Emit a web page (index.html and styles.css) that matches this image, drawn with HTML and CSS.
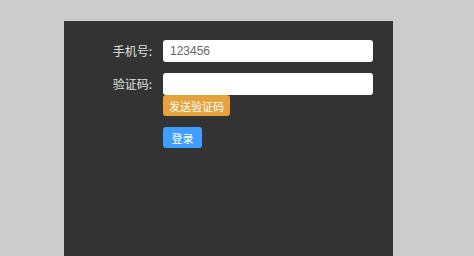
FILE: index.html
```html
<!DOCTYPE html>
<html lang="zh">
<head>
  <meta charset="UTF-8">
  <title>登录</title>
  <link rel="stylesheet" href="styles.css">
</head>
<body>

<div class="login-box">
  <div class="form-row">
    <label class="form-label">手机号:</label>
    <input class="form-input" type="text" value="123456">
  </div>
  <div class="form-row">
    <label class="form-label">验证码:</label>
    <div class="code-field">
      <input class="form-input" type="text">
      <button class="btn btn-send">发送验证码</button>
    </div>
  </div>
  <div class="form-row">
    <span></span>
    <button class="btn btn-login">登录</button>
  </div>
</div>

</body>
</html>
```

FILE: styles.css
```css
body {
  background-color: #cccccc;
  font-family: "Noto Sans CJK SC", "Liberation Sans", sans-serif;
  margin: 0;
  padding-top: 21px;
}
.login-box {
  width: 329px;
  height: 235px;
  margin-left: 64px;
  background: #333333;
  padding: 19px 20px 0 0;
  box-sizing: border-box;
}
.form-row {
  display: grid;
  grid-template-columns: 88px 210px;
  column-gap: 11px;
  align-items: start;
  margin-bottom: 11px;
}
.form-label {
  color: #e0e0e0;
  font-size: 12px;
  text-align: right;
  line-height: 22px;
}
.code-field {
  display: flex;
  flex-direction: column;
  align-items: flex-start;
}
.form-input {
  width: 210px;
  height: 22px;
  box-sizing: border-box;
  border: none;
  border-radius: 3px;
  background: #fff;
  padding: 0 7px;
  font-family: "Liberation Sans", sans-serif;
  font-size: 12px;
  color: #666;
  outline: none;
}
.btn {
  border: none;
  border-radius: 3px;
  color: #fff;
  font-family: "Noto Sans CJK SC", sans-serif;
  font-size: 11px;
  height: 21px;
  padding: 0;
  cursor: pointer;
}
.btn-send {
  width: 67px;
  background-color: #e6a23c;
}
.btn-login {
  width: 39px;
  background-color: #409eff;
}
```
